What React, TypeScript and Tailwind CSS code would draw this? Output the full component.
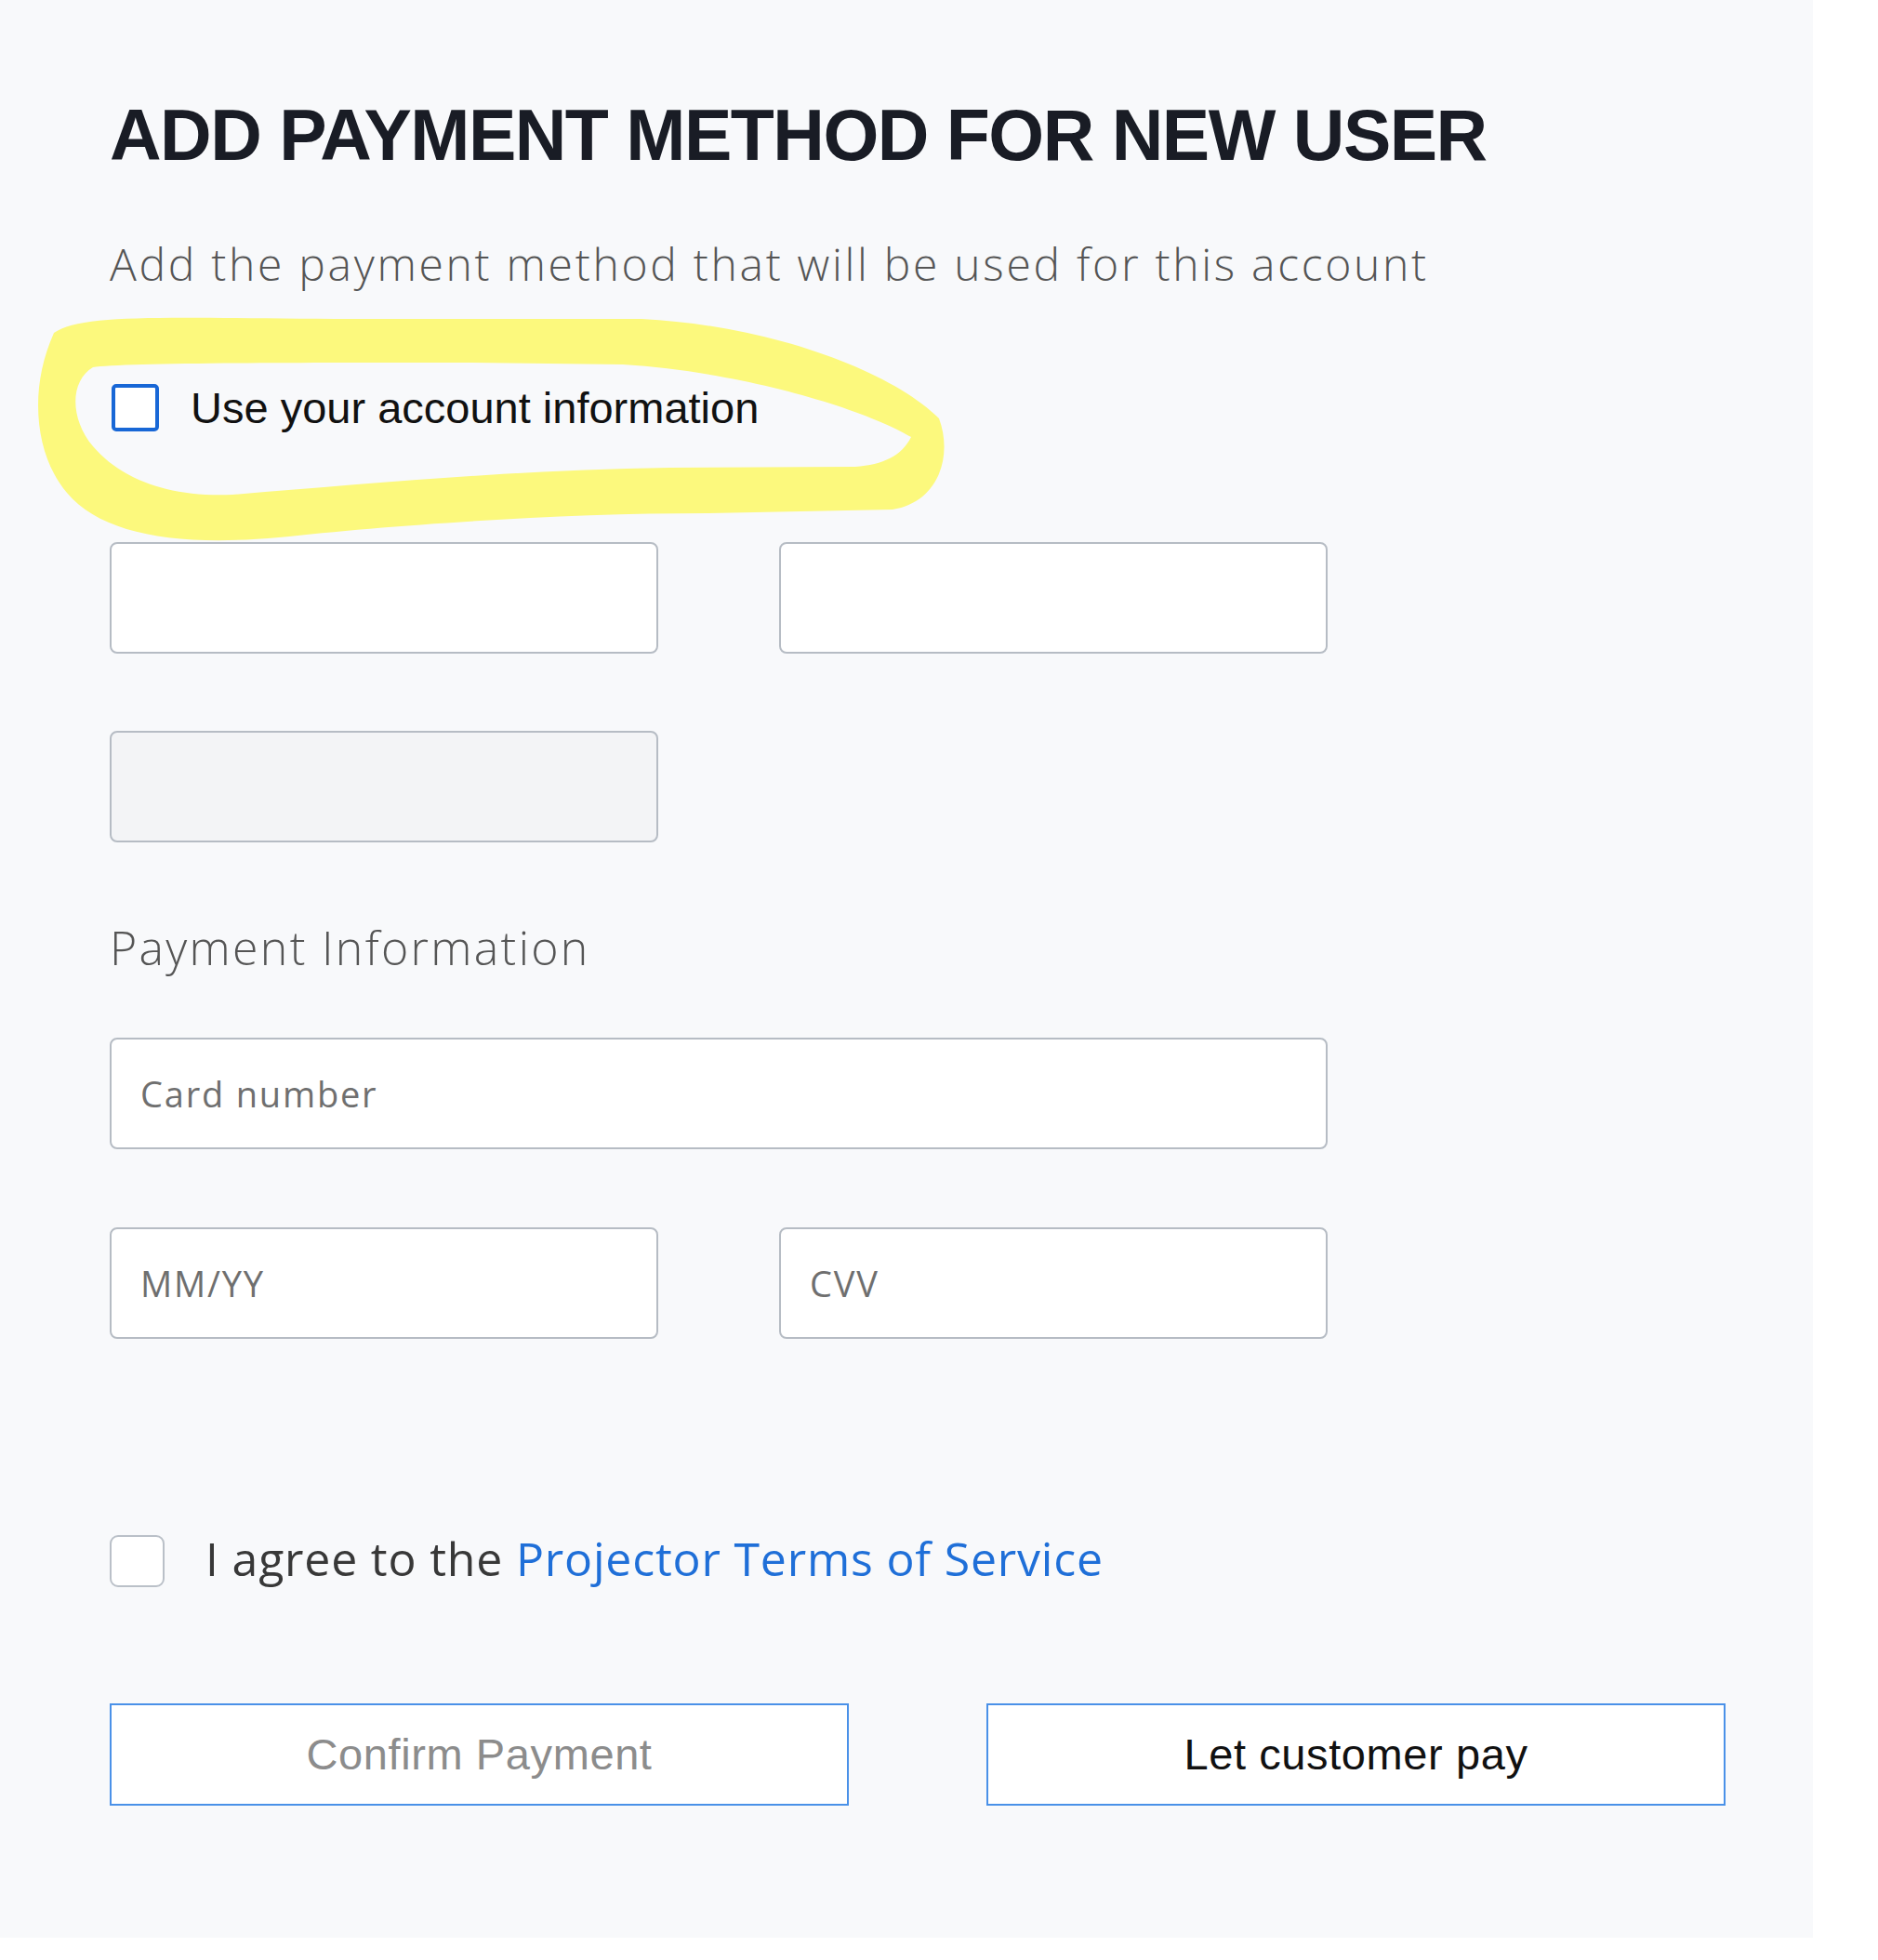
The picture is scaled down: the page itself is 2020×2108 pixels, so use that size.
import React from "react";

function Highlight() {
  return (
    <svg
      className="absolute left-0 top-0 pointer-events-none"
      width="1100"
      height="620"
      viewBox="0 0 1100 620"
    >
      <path
        fillRule="evenodd"
        fill="#fcf97d"
        d="M 58 358 C 90 335, 200 343, 400 343 L 690 343 C 830 350, 960 400, 1010 450 C 1025 490, 1010 540, 960 548 L 760 552 C 600 552, 420 565, 300 578 C 190 588, 110 575, 72 530 C 38 490, 30 420, 58 358 Z
           M 100 395 C 130 390, 300 390, 500 390 L 670 392 C 800 400, 930 440, 980 470 C 970 490, 950 500, 920 502 L 720 503 C 560 505, 400 520, 250 532 C 180 535, 130 515, 100 480 C 75 450, 75 410, 100 395 Z"
      />
    </svg>
  );
}

function Field({ placeholder, disabled }: { placeholder?: string; disabled?: boolean }) {
  return (
    <input
      disabled={disabled}
      placeholder={placeholder}
      className={`h-[120px] w-full rounded-[8px] border-2 border-[#b6bcc4] px-[31px] font-['Open_Sans',sans-serif] text-[38px] tracking-[1.8px] text-[#333] outline-none placeholder:text-[#6f6f6f] ${
        disabled ? "bg-[#f3f4f6]" : "bg-white"
      }`}
    />
  );
}

export default function App() {
  return (
    <div className="min-h-screen bg-white">
      <div className="relative w-[1950px] min-h-[2084px] bg-[#f8f9fb] pl-[118px] pt-[107px]">
        <h1 className="font-['Liberation_Sans',Arial,sans-serif] text-[77px] font-bold leading-none tracking-[-1.5px] text-[#191c25]">
          ADD PAYMENT METHOD FOR NEW USER
        </h1>

        <p className="mt-[76px] font-['Open_Sans',sans-serif] text-[48px] font-light leading-none tracking-[2.7px] text-[#555]">
          Add the payment method that will be used for this account
        </p>

        {/* account info toggle */}
        <Highlight />
        <label className="relative mt-[105px] ml-[2px] flex items-center gap-[34px]">
          <span className="block h-[51px] w-[51px] rounded-[5px] border-[4px] border-[#1867d6] bg-white" />
          <span className="font-['Liberation_Sans',Arial,sans-serif] text-[47px] leading-none text-[#111]">
            Use your account information
          </span>
        </label>

        <div className="mt-[119px] grid w-[1310px] grid-cols-2 gap-x-[130px]">
          <Field />
          <Field />
        </div>

        <div className="mt-[83px] w-[590px]">
          <Field disabled />
        </div>

        <h2 className="mt-[88px] font-['Open_Sans',sans-serif] text-[50px] font-light leading-none tracking-[2.3px] text-[#555]">
          Payment Information
        </h2>

        <div className="mt-[72px] w-[1310px]">
          <Field placeholder="Card number" />
        </div>

        <div className="mt-[84px] grid w-[1310px] grid-cols-2 gap-x-[130px]">
          <Field placeholder="MM/YY" />
          <Field placeholder="CVV" />
        </div>

        {/* terms */}
        <div className="mt-[211px] flex items-center gap-[44px]">
          <span className="block h-[56px] w-[59px] rounded-[9px] border-2 border-[#bac0c8] bg-white" />
          <p className="pb-[6px] font-['Open_Sans',sans-serif] text-[50px] leading-none tracking-[0.8px] text-[#383838]">
            I agree to the{" "}
            <a href="#" className="font-medium text-[#1f6fd8]">
              Projector Terms of Service
            </a>
          </p>
        </div>

        <div className="mt-[125px] flex gap-[148px]">
          <button className="h-[110px] w-[795px] border-2 border-[#4a91e8] bg-white font-['Liberation_Sans',Arial,sans-serif] text-[47px] tracking-[0.6px] text-[#8c8c8c]">
            Confirm Payment
          </button>
          <button className="h-[110px] w-[795px] border-2 border-[#4a91e8] bg-white font-['Liberation_Sans',Arial,sans-serif] text-[47px] tracking-[0.6px] text-[#111]">
            Let customer pay
          </button>
        </div>
      </div>
    </div>
  );
}
